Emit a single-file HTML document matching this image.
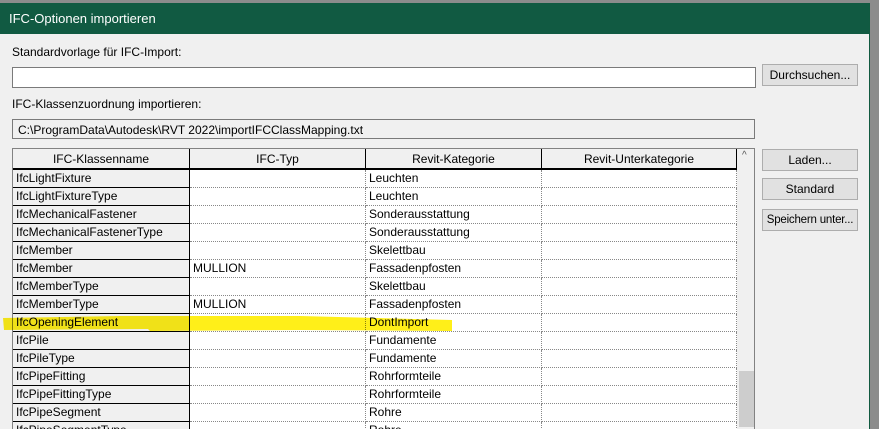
<!DOCTYPE html>
<html><head><meta charset="utf-8"><style>
*{box-sizing:border-box;margin:0;padding:0}
body{width:879px;height:429px;overflow:hidden;background:#8c8c8c;font-family:"Liberation Sans",sans-serif;font-size:12px;color:#000;position:relative}
.win{position:absolute;left:0;top:3px;width:870px;height:426px;background:#f0f0f0;border-right:1px solid #115a40;overflow:hidden}
.title{position:absolute;left:0;top:0;width:870px;height:31px;background:#115a42;color:#fff;font-size:13px;padding:8px 0 0 9px}
.a{position:absolute}
.lbl{position:absolute;left:12px}
.btn{position:absolute;left:762px;width:96px;height:22px;background:#e1e1e1;border:1px solid #adadad;text-align:center;line-height:20px;white-space:nowrap;overflow:hidden}
.tbl{position:absolute;left:12px;top:145px;width:743px;height:290px;background:#fff;border:1px solid #828282;overflow:hidden}
.row{position:absolute;left:0;width:723px;height:18px}
.c{position:absolute;top:0;height:18px;line-height:17px;padding-left:3px;white-space:nowrap;overflow:hidden}
.c1{left:0;width:177px;background:#f0f0f0;border-right:1px solid #000;border-bottom:1px solid #000}
.c2{left:177px;width:176px;border-right:1px dotted #888;border-bottom:1px dotted #888}
.c3{left:353px;width:176px;border-right:1px dotted #888;border-bottom:1px dotted #888}
.c4{left:529px;width:195px;border-right:1px dotted #888;border-bottom:1px dotted #888}
.hd{position:absolute;top:0;height:21px;line-height:21px;text-align:center;background:#f0f0f0;border-right:1px solid #000;border-bottom:2px solid #000}
</style></head><body>
<div class="win">
<div class="title">IFC-Optionen importieren</div>
<div class="lbl" style="top:42px">Standardvorlage für IFC-Import:</div>
<div class="a" style="left:12px;top:64px;width:744px;height:21px;background:#fff;border:1px solid #7a7a7a"></div>
<div class="btn" style="top:61px">Durchsuchen...</div>
<div class="lbl" style="top:94px">IFC-Klassenzuordnung importieren:</div>
<div class="a" style="left:12px;top:116px;width:743px;height:20px;border:1px solid #7a7a7a;padding:3px 0 0 5px">C:\ProgramData\Autodesk\RVT 2022\importIFCClassMapping.txt</div>
<div class="btn" style="top:146px">Laden...</div>
<div class="btn" style="top:175px">Standard</div>
<div class="btn" style="top:206px;font-size:11.5px;letter-spacing:-0.2px">Speichern unter...</div>
<div class="tbl">
<div class="hd" style="left:0;width:177px">IFC-Klassenname</div>
<div class="hd" style="left:177px;width:176px">IFC-Typ</div>
<div class="hd" style="left:353px;width:176px">Revit-Kategorie</div>
<div class="hd" style="left:529px;width:195px">Revit-Unterkategorie</div>
<div class="a" style="left:724px;top:0;width:18px;height:290px;background:#f0f0f0"></div>
<div class="a" style="left:729px;top:1px;font-size:10px;color:#555">^</div>
<div class="a" style="left:726px;top:222px;width:15px;height:56px;background:#cdcdcd"></div>
<div class="row" style="top:21px"><div class="c c1">IfcLightFixture</div><div class="c c2"></div><div class="c c3">Leuchten</div><div class="c c4"></div></div>
<div class="row" style="top:39px"><div class="c c1">IfcLightFixtureType</div><div class="c c2"></div><div class="c c3">Leuchten</div><div class="c c4"></div></div>
<div class="row" style="top:57px"><div class="c c1">IfcMechanicalFastener</div><div class="c c2"></div><div class="c c3">Sonderausstattung</div><div class="c c4"></div></div>
<div class="row" style="top:75px"><div class="c c1">IfcMechanicalFastenerType</div><div class="c c2"></div><div class="c c3">Sonderausstattung</div><div class="c c4"></div></div>
<div class="row" style="top:93px"><div class="c c1">IfcMember</div><div class="c c2"></div><div class="c c3">Skelettbau</div><div class="c c4"></div></div>
<div class="row" style="top:111px"><div class="c c1">IfcMember</div><div class="c c2">MULLION</div><div class="c c3">Fassadenpfosten</div><div class="c c4"></div></div>
<div class="row" style="top:129px"><div class="c c1">IfcMemberType</div><div class="c c2"></div><div class="c c3">Skelettbau</div><div class="c c4"></div></div>
<div class="row" style="top:147px"><div class="c c1">IfcMemberType</div><div class="c c2">MULLION</div><div class="c c3">Fassadenpfosten</div><div class="c c4"></div></div>
<div class="row" style="top:165px"><div class="c c1">IfcOpeningElement</div><div class="c c2"></div><div class="c c3">DontImport</div><div class="c c4"></div></div>
<div class="row" style="top:183px"><div class="c c1">IfcPile</div><div class="c c2"></div><div class="c c3">Fundamente</div><div class="c c4"></div></div>
<div class="row" style="top:201px"><div class="c c1">IfcPileType</div><div class="c c2"></div><div class="c c3">Fundamente</div><div class="c c4"></div></div>
<div class="row" style="top:219px"><div class="c c1">IfcPipeFitting</div><div class="c c2"></div><div class="c c3">Rohrformteile</div><div class="c c4"></div></div>
<div class="row" style="top:237px"><div class="c c1">IfcPipeFittingType</div><div class="c c2"></div><div class="c c3">Rohrformteile</div><div class="c c4"></div></div>
<div class="row" style="top:255px"><div class="c c1">IfcPipeSegment</div><div class="c c2"></div><div class="c c3">Rohre</div><div class="c c4"></div></div>
<div class="row" style="top:273px"><div class="c c1">IfcPipeSegmentType</div><div class="c c2"></div><div class="c c3">Rohre</div><div class="c c4"></div></div>
</div>
</div>
<svg class="a" style="left:0;top:0" width="879" height="429"><polygon points="3,318 120,316 300,316 452,320 452,331 300,330 150,331 148,329 4,330" fill="#ffee00" opacity="0.9" style="mix-blend-mode:multiply"/></svg>
</body></html>
